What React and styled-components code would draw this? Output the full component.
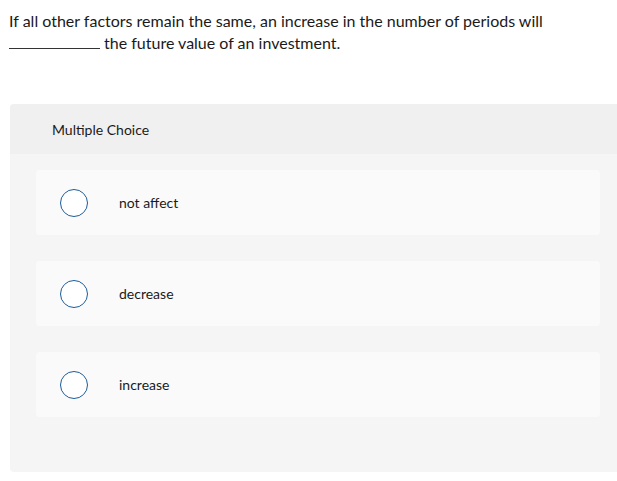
import React from "react";
import styled, { createGlobalStyle } from "styled-components";

const Global = createGlobalStyle`
  html, body { margin: 0; padding: 0; background: #fff; overflow: hidden; }
  body { font-family: Lato, "Open Sans", Arial, sans-serif; color: #1f1f1f; }
`;

const Page = styled.div`
  width: 617px;
  padding-top: 10px;
`;

const Question = styled.p`
  margin: 0 0 0 9px;
  font-size: 16px;
  line-height: 22px;
  color: #1a1a1a;
`;

const Blank = styled.span`
  display: inline-block;
  width: 91px;
  border-bottom: 1px solid #333;
  margin-right: 4px;
  vertical-align: baseline;
  height: 14px;
`;

const Panel = styled.section`
  margin: 50px 0 0 10px;
  height: 368px;
  background: #f5f5f5;
  border-radius: 4px 0 0 4px;
  overflow: hidden;
  display: flex;
  flex-direction: column;
`;

const Header = styled.div`
  height: 50px;
  background: #f0f0f0;
  display: flex;
  align-items: center;
  padding-left: 42px;
  font-size: 14px;
  color: #1a1a1a;
`;

const Options = styled.div`
  display: flex;
  flex-direction: column;
  gap: 26px;
  padding: 16px 17px 0 26px;
`;

const Option = styled.label`
  height: 65px;
  background: #fafafa;
  border-radius: 4px;
  display: flex;
  align-items: center;
  padding-left: 24px;
  cursor: pointer;
`;

const Radio = styled.span`
  width: 26px;
  height: 26px;
  border: 1.5px solid #1d5d99;
  border-radius: 50%;
  flex: none;
  background: #fff;
`;

const Label = styled.span`
  margin-left: 31px;
  font-size: 14px;
  color: #1a1a1a;
`;

const choices = ["not affect", "decrease", "increase"];

export default function App() {
  return (
    <Page>
      <Global />
      <Question>
        If all other factors remain the same, an increase in the number of periods will
        <br />
        <Blank />the future value of an investment.
      </Question>
      <Panel>
        <Header>Multiple Choice</Header>
        <Options>
          {choices.map((c) => (
            <Option key={c}>
              <Radio />
              <Label>{c}</Label>
            </Option>
          ))}
        </Options>
      </Panel>
    </Page>
  );
}
